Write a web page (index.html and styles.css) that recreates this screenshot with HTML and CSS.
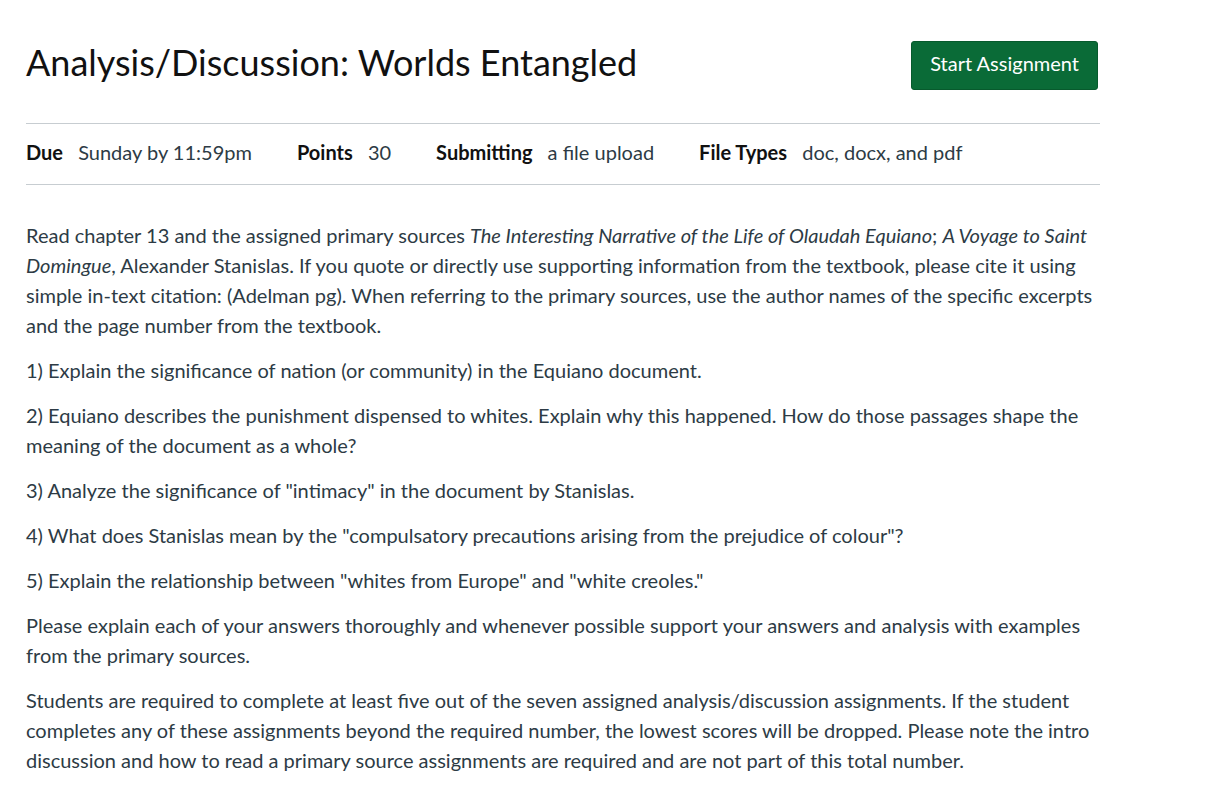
FILE: index.html
```html
<!DOCTYPE html>
<html lang="en">
<head>
    <meta charset="UTF-8">
    <meta name="viewport" content="width=device-width, initial-scale=1.0">
    <title>Analysis/Discussion: Worlds Entangled</title>
    <link rel="stylesheet" href="styles.css">
</head>
<body>
    <div class="container">
        <div class="assignment-header">
            <h1 class="title">Analysis/Discussion: Worlds Entangled</h1>
            <button class="start-btn" type="button">Start Assignment</button>
        </div>

        <ul class="details">
            <li><span class="label">Due</span> <span class="value">Sunday by 11:59pm</span></li>
            <li><span class="label">Points</span> <span class="value">30</span></li>
            <li><span class="label">Submitting</span> <span class="value">a file upload</span></li>
            <li><span class="label">File Types</span> <span class="value">doc, docx, and pdf</span></li>
        </ul>

        <div class="description">
            <p>Read chapter 13 and the assigned primary sources <em>The Interesting Narrative of the Life of Olaudah Equiano</em>; <em>A Voyage to Saint Domingue</em>, Alexander Stanislas. If you quote or directly use supporting information from the textbook, please cite it using simple in-text citation: (Adelman pg). When referring to the primary sources, use the author names of the specific excerpts and the page number from the textbook.</p>
            <p>1) Explain the significance of nation (or community) in the Equiano document.</p>
            <p>2) Equiano describes the punishment dispensed to whites. Explain why this happened. How do those passages shape the meaning of the document as a whole?</p>
            <p>3) Analyze the significance of "intimacy" in the document by Stanislas.</p>
            <p>4) What does Stanislas mean by the "compulsatory precautions arising from the prejudice of colour"?</p>
            <p>5) Explain the relationship between "whites from Europe" and "white creoles."</p>
            <p>Please explain each of your answers thoroughly and whenever possible support your answers and analysis with examples from the primary sources.</p>
            <p>Students are required to complete at least five out of the seven assigned analysis/discussion assignments. If the student completes any of these assignments beyond the required number, the lowest scores will be dropped. Please note the intro discussion and how to read a primary source assignments are required and are not part of this total number.</p>
        </div>
    </div>
</body>
</html>
```

FILE: styles.css
```css
body {
    margin: 0;
    font-family: Lato, "Noto Sans", sans-serif;
    color: #2d3b45;
    background-color: #fff;
}
.container {
    width: 1074px;
    padding: 40px 26px 0 26px;
}
.assignment-header {
    display: flex;
    align-items: center;
    justify-content: space-between;
    padding-right: 2px;
    margin-bottom: 33px;
}
.title {
    margin: 0 0 5px 0;
    font-size: 36px;
    font-weight: 400;
    line-height: 45px;
    color: #111;
}
.start-btn {
    height: 49px;
    padding: 0 18px 4px 18px;
    font-family: inherit;
    font-size: 20px;
    color: #fff;
    background-color: #0a6b37;
    border: 1px solid #075a2d;
    border-radius: 3px;
    cursor: pointer;
}
.details {
    display: flex;
    list-style: none;
    margin: 0;
    padding: 13px 0 17px 0;
    border-top: 1px solid #c7cdd1;
    border-bottom: 1px solid #c7cdd1;
    font-size: 20px;
    line-height: 30px;
}
.details li {
    margin-right: 45px;
}
.details .label {
    font-weight: 700;
    color: #111;
    margin-right: 10px;
}
.description {
    margin-top: 35px;
    font-size: 20px;
    line-height: 30px;
}
.description p {
    margin: 0 0 15px 0;
}
```
